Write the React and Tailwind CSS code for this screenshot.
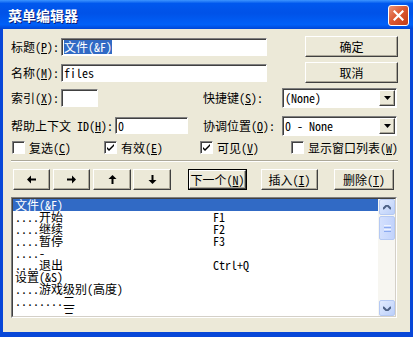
import React from "react";

const raised =
  "bg-[#ece9d8] border border-t-white border-l-white border-r-[#404040] border-b-[#404040] shadow-[inset_-1px_-1px_0_#aca899]";
const sunken =
  "bg-white border border-t-[#808080] border-l-[#808080] border-r-white border-b-white shadow-[inset_1px_1px_0_#404040]";

function Btn({ children, className = "" }) {
  return (
    <div className={`flex items-center justify-center ${raised} ${className}`}>
      {children}
    </div>
  );
}

function Field({ children, className = "" }) {
  return (
    <div className={`flex items-center pl-[2px] ${sunken} ${className}`}>
      {children}
    </div>
  );
}

function Select({ value }) {
  return (
    <div className={`flex h-[20px] w-[115px] items-center justify-between pl-[2px] pr-[1px] ${sunken}`}>
      <span>{value}</span>
      <div className={`flex h-[16px] w-[16px] items-center justify-center ${raised}`}>
        <svg width="7" height="4" viewBox="0 0 7 4">
          <path d="M0 0h7L3.5 4z" fill="#000" />
        </svg>
      </div>
    </div>
  );
}

function Check({ checked, children, className = "" }) {
  return (
    <div className={`flex items-center ${className}`}>
      <div className={`flex h-[13px] w-[13px] shrink-0 items-center justify-center ${sunken}`}>
        {checked && (
          <svg width="7" height="7" viewBox="0 0 7 7">
            <path d="M0 3l2 2 5-5v2L2 7 0 5z" fill="#000" />
          </svg>
        )}
      </div>
      <span className="ml-[4px]">{children}</span>
    </div>
  );
}

function Arrow({ dir }) {
  const rot = { left: "rotate-0", right: "rotate-180", up: "rotate-90", down: "-rotate-90" }[dir];
  return (
    <svg width="9" height="9" viewBox="0 0 9 9" className={rot}>
      <path d="M0 4.5L4 0.5v3h5v2H4v3z" fill="#000" />
    </svg>
  );
}

const rows = [
  ["文件(&F)", "", true],
  ["....开始", "F1"],
  ["....继续", "F2"],
  ["....暂停", "F3"],
  ["....-", ""],
  ["....退出", "Ctrl+Q"],
  ["设置(&S)", ""],
  ["....游戏级别(高度)", ""],
  ["........二", ""],
  ["........三", ""],
];

export default function App() {
  return (
    <div className="w-[413px] h-[337px] overflow-hidden bg-[#0847d8] text-[12px] leading-[12px] text-black font-['Noto_Sans_Mono_CJK_SC','Liberation_Mono','Noto_Sans_CJK_SC',monospace]">
      {/* 标题栏 */}
      <div className="relative flex h-[29px] items-center bg-[linear-gradient(to_bottom,#3d95ff_0%,#0058ee_12%,#0052e8_45%,#0060f8_85%,#0046d6_100%)] pl-[8px]">
        <span className="text-[14px] font-bold leading-[14px] text-white [text-shadow:1px_1px_0_#0a1e78] font-['Noto_Sans_CJK_SC',sans-serif]">
          菜单编辑器
        </span>
        <div className="absolute left-[388px] top-[5px] flex h-[21px] w-[21px] items-center justify-center rounded-[3px] border border-white bg-[linear-gradient(135deg,#eb9377_0%,#dc5a33_45%,#c33b15_100%)]">
          <svg width="11" height="11" viewBox="0 0 11 11">
            <path d="M1.5 1.5l8 8M9.5 1.5l-8 8" stroke="#fff" strokeWidth="2.2" strokeLinecap="square" />
          </svg>
        </div>
      </div>

      {/* 窗体 */}
      <div className="mx-[3px] h-[303px] bg-[#ece9d8] pl-[8px] pt-[7px]">
        {/* 第1行 */}
        <div className="flex h-[21px] items-center">
          <span className="w-[50px]">标题(<u>P</u>):</span>
          <Field className="h-[18px] w-[206px]">
            <span className="bg-[#316ac5] text-white leading-[14px]">文件(&amp;F)</span>
          </Field>
          <Btn className="ml-[38px] h-[21px] w-[93px]">确定</Btn>
        </div>

        {/* 第2行 */}
        <div className="mt-[5px] flex h-[21px] items-center">
          <span className="w-[50px]">名称(<u>M</u>):</span>
          <Field className="h-[18px] w-[206px]">files</Field>
          <Btn className="ml-[38px] h-[21px] w-[93px]">取消</Btn>
        </div>

        {/* 第3行 */}
        <div className="mt-[5px] flex h-[20px] items-center">
          <span className="w-[50px]">索引(<u>X</u>):</span>
          <Field className="h-[18px] w-[37px]" />
          <span className="ml-[105px] w-[79px]">快捷键(<u>S</u>):</span>
          <Select value="(None)" />
        </div>

        {/* 第4行 */}
        <div className="mt-[8px] flex h-[19px] items-center">
          <span className="w-[104px]">帮助上下文 ID(<u>H</u>):</span>
          <Field className="h-[17px] w-[73px]">0</Field>
          <span className="ml-[15px] w-[79px]">协调位置(<u>O</u>):</span>
          <Select value="0 - None" />
        </div>

        {/* 复选框 */}
        <div className="mt-[6px] flex h-[13px] items-center pl-[1px]">
          <Check className="w-[92px]">复选(<u>C</u>)</Check>
          <Check className="w-[96px]" checked>有效(<u>E</u>)</Check>
          <Check className="w-[91px]" checked>可见(<u>V</u>)</Check>
          <Check>显示窗口列表(<u>W</u>)</Check>
        </div>

        {/* 分隔线 */}
        <div className="mt-[6px] w-[387px] border-t border-b border-t-[#aca899] border-b-white" />

        {/* 按钮行 */}
        <div className="mt-[7px] flex h-[21px] items-center">
          <Btn className="ml-[2px] h-[21px] w-[37px]"><Arrow dir="left" /></Btn>
          <Btn className="ml-[3px] h-[21px] w-[37px]"><Arrow dir="right" /></Btn>
          <Btn className="ml-[3px] h-[21px] w-[38px]"><Arrow dir="up" /></Btn>
          <Btn className="ml-[2px] h-[21px] w-[38px]"><Arrow dir="down" /></Btn>
          <div className="ml-[17px] h-[21px] w-[59px] border border-black">
            <Btn className="h-full w-full">下一个(<u>N</u>)</Btn>
          </div>
          <Btn className="ml-[14px] h-[21px] w-[57px]">插入(<u>I</u>)</Btn>
          <Btn className="ml-[16px] h-[21px] w-[60px]">删除(<u>T</u>)</Btn>
        </div>

        {/* 菜单列表 */}
        <div className="mt-[7px] flex h-[121px] w-[386px] border border-t-[#808080] border-l-[#808080] border-r-white border-b-white">
          <div className="flex flex-1 overflow-hidden border border-t-[#404040] border-l-[#404040] border-r-[#d4d0c8] border-b-[#d4d0c8] bg-white">
            <div className="flex-1 overflow-hidden">
              {rows.map(([name, key, sel], i) => (
                <div
                  key={i}
                  className={`flex h-[12px] items-center whitespace-pre pl-[2px] ${sel ? "bg-[#316ac5] text-white" : ""}`}
                >
                  <span className="w-[198px]">{name}</span>
                  <span>{key}</span>
                </div>
              ))}
            </div>
            {/* 滚动条 */}
            <div className="flex w-[17px] flex-col bg-[#f7f6f1] pl-[1px]">
              <div className="flex h-[16px] items-center justify-center rounded-[2px] border border-[#b5c9f3] bg-[linear-gradient(135deg,#e2ebfe,#bcd0fa)]">
                <svg width="8" height="5" viewBox="0 0 8 5">
                  <path d="M0 4l4-4 4 4" stroke="#4d6185" strokeWidth="2" fill="none" />
                </svg>
              </div>
              <div className="mt-px flex h-[24px] items-center justify-center rounded-[2px] border border-[#b5c9f3] bg-[linear-gradient(to_right,#d4e0fd,#c2d3fc)]">
                <div className="flex w-[7px] flex-col gap-[1px]">
                  <div className="h-px bg-[#eef3fe]" />
                  <div className="h-px bg-[#8caaf0]" />
                  <div className="h-px bg-[#eef3fe]" />
                  <div className="h-px bg-[#8caaf0]" />
                </div>
              </div>
              <div className="flex-1" />
              <div className="flex h-[16px] items-center justify-center rounded-[2px] border border-[#b5c9f3] bg-[linear-gradient(135deg,#e2ebfe,#bcd0fa)]">
                <svg width="8" height="5" viewBox="0 0 8 5">
                  <path d="M0 1l4 4 4-4" stroke="#4d6185" strokeWidth="2" fill="none" />
                </svg>
              </div>
            </div>
          </div>
        </div>
      </div>
    </div>
  );
}
